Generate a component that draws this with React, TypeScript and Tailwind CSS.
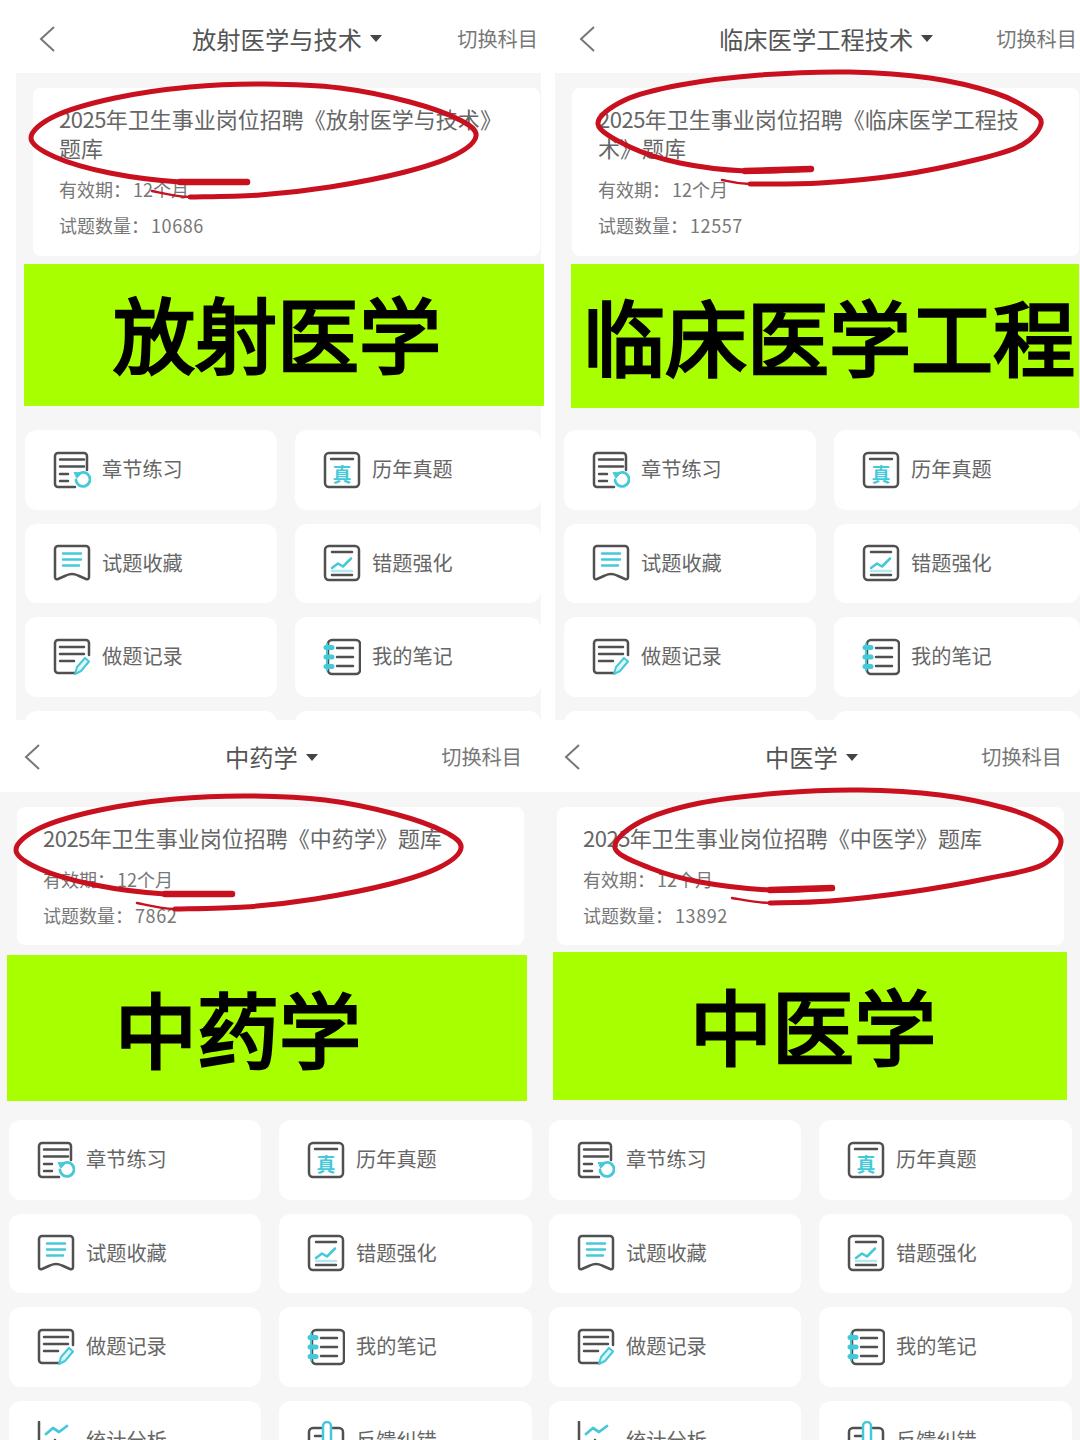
import React from "react";

const DARK = "#505050";
const TEAL = "#45c9d9";

function Svg({ children }: { children: React.ReactNode }) {
  return (
    <svg width="38" height="38" viewBox="0 0 38 38" fill="none" strokeWidth="2.500" strokeLinecap="round" strokeLinejoin="round" className="shrink-0">
      {children}
    </svg>
  );
}

const IconChapter = () => (
  <Svg>
    <path d="M34 19V5a3 3 0 0 0-3-3H5a3 3 0 0 0-3 3v28a3 3 0 0 0 3 3h17" stroke={DARK} />
    <path d="M7 8.500h24M7 15.500h24M7 23h8M7 30h8" stroke={DARK} />
    <path d="M25 23.500a7 7 0 1 1-2 5.500" stroke={TEAL} strokeWidth="2.800" />
    <path d="M21.500 21.500l7 .5-4.500 5z" fill={TEAL} stroke={TEAL} strokeWidth="1" />
  </Svg>
);
const IconCollect = () => (
  <Svg>
    <path d="M5 2h28a3 3 0 0 1 3 3v28q0 3-3 2l-8-3.500q-6-3-12 0L5 35q-3 1-3-2V5a3 3 0 0 1 3-3z" stroke={DARK} />
    <path d="M10 9.500h18M10 15.500h18M10 21.500h16" stroke={TEAL} />
  </Svg>
);
const IconExam = () => (
  <Svg>
    <rect x="2" y="2" width="34" height="34" rx="4" stroke={DARK} />
    <path d="M8 8h22" stroke={DARK} />
    <text x="19" y="30.500" textAnchor="middle" fontSize="19" fontWeight="700" fill={TEAL} stroke="none" fontFamily='"Noto Sans CJK SC", sans-serif'>真</text>
  </Svg>
);
const IconWrong = () => (
  <Svg>
    <rect x="2" y="2" width="34" height="34" rx="4" stroke={DARK} />
    <path d="M9 8h20M9 31h20" stroke={DARK} />
    <path d="M9 24l6-4.500 5 3 8-8" stroke={TEAL} />
    <path d="M9 27h20" stroke={TEAL} strokeOpacity="0.400" />
  </Svg>
);
const IconRecord = () => (
  <Svg>
    <path d="M36 17V5a3 3 0 0 0-3-3H5a3 3 0 0 0-3 3v27a3 3 0 0 0 3 3h17" stroke={DARK} />
    <path d="M7 9h24M7 16h24M7 23h14" stroke={DARK} />
    <path d="M22 36l2-7 8-9 4 3.500-8 9.500z" stroke={TEAL} fill="#dff6f9" strokeWidth="2" />
  </Svg>
);
const IconNote = () => (
  <Svg>
    <rect x="5" y="2" width="32" height="34" rx="4" stroke={DARK} />
    <path d="M14 10h16M14 19h16M14 28h16" stroke={DARK} />
    <path d="M3 9.500h6M3 19h6M3 28.500h6" stroke={TEAL} strokeWidth="5" />
    <path d="M4 5.500v27" stroke={TEAL} strokeWidth="2" />
  </Svg>
);
const IconStats = () => (
  <Svg>
    <path d="M2 1v36" stroke={DARK} />
    <path d="M9 13l7-6 6 4 8-6" stroke={TEAL} strokeWidth="2.800" />
    <path d="M10 23v8M18 19v12M27 21v10" stroke={DARK} />
  </Svg>
);
const IconFeedback = () => (
  <Svg>
    <path d="M14 7H6a4 4 0 0 0-4 4v24M26 7h6a4 4 0 0 1 4 4v24" stroke={DARK} />
    <path d="M8 15h6M8 22h6" stroke={DARK} />
    <path d="M16 5a4 4 0 0 1 8 0v30h-8z" stroke={TEAL} fill="#ffffff" />
  </Svg>
);

const tiles: [React.ComponentType, string][] = [
  [IconChapter, "章节练习"],
  [IconExam, "历年真题"],
  [IconCollect, "试题收藏"],
  [IconWrong, "错题强化"],
  [IconRecord, "做题记录"],
  [IconNote, "我的笔记"],
  [IconStats, "统计分析"],
  [IconFeedback, "反馈纠错"],
];

type PanelProps = {
  outer: string;
  header: string;
  titleMl: string;
  rightMr: string;
  body: string;
  title: string;
  name: string;
  count: string;
  cardClass: string;
  banner: string;
  bannerText: string;
  bannerClass: string;
  grid: string;
};

function Panel(p: PanelProps) {
  return (
    <div className={`overflow-hidden bg-white h-[720px] flex flex-col ${p.outer}`}>
      <div className={`flex items-center shrink-0 ${p.header}`}>
        <svg width="16" height="28" viewBox="0 0 16 28" fill="none" stroke="#777777" strokeWidth="2" className="shrink-0">
          <path d="M15 2L2 14l13 12" />
        </svg>
        <div className={`flex items-center text-[24.300px] leading-[32px] text-[#555555] whitespace-nowrap ${p.titleMl}`}>
          <span>{p.title}</span>
          <span className="ml-2 w-0 h-0 border-x-[6px] border-x-transparent border-t-[7px] border-t-[#444444]" />
        </div>
        <div className={`ml-auto text-[20.200px] leading-[28px] text-[#777777] whitespace-nowrap ${p.rightMr}`}>切换科目</div>
      </div>
      <div className={`flex-1 bg-[#f6f6f6] ${p.body}`}>
        <div className={`ml-[17px] w-[507px] rounded-lg bg-white pl-[26px] ${p.cardClass}`}>
          <div className="w-[438px] text-[22px] leading-[29px] text-[#666666]">
            <span className="tracking-[-0.500px]">2025</span>年卫生事业岗位招聘《{p.name}》题库
          </div>
          <div className="text-[18px] leading-[26px] text-[#777777] mt-[14px]">
            有效期：<span className="ml-[2px]">12个月</span>
          </div>
          <div className="text-[18px] leading-[26px] text-[#777777] mt-[10px]">
            试题数量：<span className="ml-[2px] tracking-[0.600px]">{p.count}</span>
          </div>
        </div>
        <div className={`bg-[#a8ff00] flex items-center text-black text-[82px] whitespace-nowrap overflow-hidden [-webkit-text-stroke:3px_black] ${p.banner}`}>
          <span className={p.bannerClass}>{p.bannerText}</span>
        </div>
        <div className={`ml-[9px] grid grid-cols-[252px_1fr] gap-x-[18px] gap-y-[14px] ${p.grid}`}>
          {tiles.map(([Icon, label]) => (
            <div key={label} className="h-[79.500px] rounded-xl bg-white flex items-center pl-[28px] gap-[11px]">
              <Icon />
              <span className="text-[20.200px] leading-[28px] pb-[1px] text-[#666666] whitespace-nowrap">{label}</span>
            </div>
          ))}
        </div>
      </div>
    </div>
  );
}

type Pt = [number, number];
function smooth(pts: Pt[]) {
  let d = `M${pts[0][0]} ${pts[0][1]}`;
  for (let i = 0; i < pts.length - 1; i++) {
    const a = pts[Math.max(i - 1, 0)];
    const b = pts[i];
    const c = pts[i + 1];
    const e = pts[Math.min(i + 2, pts.length - 1)];
    d += `C${b[0] + (c[0] - a[0]) / 6} ${b[1] + (c[1] - a[1]) / 6} ${c[0] - (e[0] - b[0]) / 6} ${c[1] - (e[1] - b[1]) / 6} ${c[0]} ${c[1]}`;
  }
  return d;
}

const ovalA: Pt[] = [[247, 182], [180, 182], [110, 173], [55, 157], [31, 138], [55, 116], [115, 98], [190, 87], [265, 84], [340, 88], [410, 102], [460, 120], [476, 136], [455, 155], [405, 172], [330, 187], [260, 195], [190, 197], [152, 191]];
const ovalB: Pt[] = [[811, 169], [745, 171], [680, 163], [630, 147], [598, 124], [625, 100], [680, 85], [760, 75], [850, 72], [930, 78], [995, 93], [1030, 110], [1041, 124], [1022, 145], [975, 160], [900, 175], [820, 183], [750, 184], [722, 180]];
const ovalC: Pt[] = ovalA.map(([x, y]) => [x - 15, y + 712]);
const ovalD: Pt[] = [[832, 888], [770, 890], [700, 882], [650, 868], [615, 848], [640, 822], [700, 803], [780, 793], [860, 790], [940, 795], [1005, 808], [1045, 824], [1061, 842], [1042, 865], [990, 878], [910, 892], [830, 901], [770, 903], [732, 898]];

function Ovals() {
  return (
    <svg width="1080" height="1440" viewBox="0 0 1080 1440" fill="none" className="absolute left-0 top-0 pointer-events-none">
      {[ovalA, ovalB, ovalC, ovalD].map((o, i) => (
        <g key={i}>
          <path d={smooth(o.slice(0, -1))} stroke="#c8101f" strokeWidth="5" strokeLinecap="round" strokeLinejoin="round" />
          <path d={smooth(o.slice(-3))} stroke="#c8101f" strokeWidth="2.500" strokeLinecap="round" />
          <path d={smooth(o.slice(0, 2))} stroke="#c8101f" strokeWidth="6.500" strokeLinecap="round" />
        </g>
      ))}
    </svg>
  );
}

export default function App() {
  return (
    <div
      className="relative w-[1080px] h-[1440px] overflow-hidden bg-white flex flex-wrap"
      style={{ fontFamily: '"Noto Sans CJK SC", "Noto Sans", sans-serif' }}
    >
      <Panel
        outer="w-[555px]"
        header="h-[73px] pl-[39px] pt-[4px]"
        titleMl="ml-[137px]"
        rightMr="mr-[17px]"
        body="ml-[16px] mr-[14px] pt-[15px]"
        title="放射医学与技术"
        name="放射医学与技术"
        count="10686"
        cardClass="h-[168px] pt-[16px]"
        banner="ml-[8px] w-[520px] h-[142px] mt-[8px] pb-[7px]"
        bannerText="放射医学"
        bannerClass="ml-[89px]"
        grid="w-[516px] mt-[24px]"
      />
      <Panel
        outer="w-[525px]"
        header="h-[73px] pl-[24px] pt-[4px]"
        titleMl="ml-[124px]"
        rightMr="mr-[3px]"
        body="pt-[15px]"
        title="临床医学工程技术"
        name="临床医学工程技术"
        count="12557"
        cardClass="h-[168px] pt-[16px]"
        banner="ml-[16px] w-[508px] h-[144px] mt-[8px] pb-[4px]"
        bannerText="临床医学工程"
        bannerClass="ml-[12px]"
        grid="w-[516px] mt-[22px]"
      />
      <Panel
        outer="w-[540px]"
        header="h-[72px] pl-[24px] pt-[2px]"
        titleMl="ml-[185px]"
        rightMr="mr-[18px]"
        body="pt-[15px]"
        title="中药学"
        name="中药学"
        count="7862"
        cardClass="h-[138px] pt-[16px]"
        banner="ml-[7px] w-[520px] h-[146px] mt-[10px] pb-[3px] text-[80px]"
        bannerText="中药学"
        bannerClass="ml-[108px]"
        grid="w-[523px] mt-[19px]"
      />
      <Panel
        outer="w-[540px]"
        header="h-[72px] pl-[24px] pt-[2px]"
        titleMl="ml-[185px]"
        rightMr="mr-[18px]"
        body="pt-[15px]"
        title="中医学"
        name="中医学"
        count="13892"
        cardClass="h-[138px] pt-[16px]"
        banner="ml-[13px] w-[514px] h-[148px] mt-[7px] pb-[6px] text-[80px]"
        bannerText="中医学"
        bannerClass="ml-[137px]"
        grid="w-[523px] mt-[20px]"
      />
      <Ovals />
    </div>
  );
}
